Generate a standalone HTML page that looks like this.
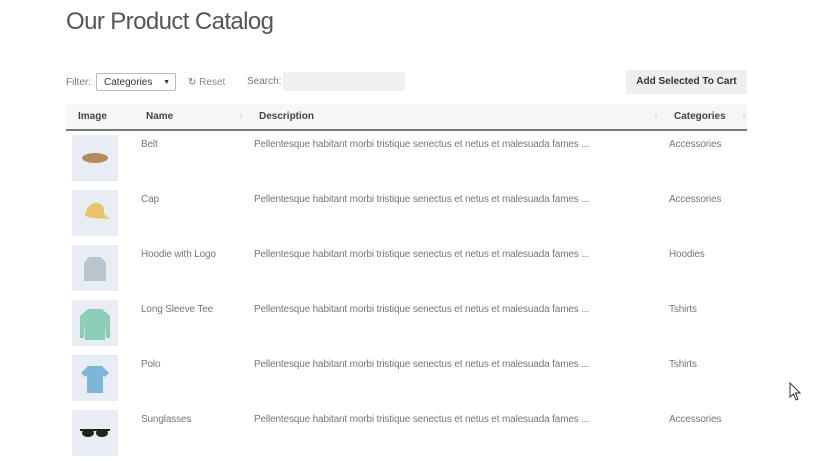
<!DOCTYPE html>
<html><head><style>
body{margin:0;width:820px;height:461px;background:#fff;font-family:"Liberation Sans",sans-serif;overflow:hidden;position:relative;color:#666}
.a{position:absolute;white-space:nowrap}
h1{position:absolute;left:66px;top:8px;margin:0;font-weight:300;font-size:24px;color:#555;letter-spacing:-0.6px}
.sm{font-size:10px;color:#777}
.th{font-size:10px;font-weight:bold;color:#444}
.td{font-size:10px;color:#777;letter-spacing:-0.15px}
.img{position:absolute;left:72px;width:46px;height:46px;background:#e8edf3}
.arr{font-size:7px;color:#ccc}
</style></head><body>
<h1>Our Product Catalog</h1>
<div class="a sm" style="left:66px;top:77px">Filter:</div>
<div class="a" style="left:96px;top:73px;width:80px;height:18px;border:1px solid #bbb;border-radius:2px;font-size:10px;color:#333;line-height:18px;padding-left:7px;box-sizing:border-box">Categories<span style="position:absolute;right:5px;font-size:7px">▼</span></div>
<div class="a sm" style="left:188px;top:77px;color:#b55">↻ <span style="color:#888">Reset</span></div>
<div class="a sm" style="left:247px;top:76px">Search:</div>
<div class="a" style="left:283px;top:72px;width:122px;height:19px;background:#f0f0f0"></div>
<div class="a" style="left:626px;top:70px;width:121px;height:24px;background:#efefef;font-size:10px;font-weight:bold;color:#333;text-align:center;line-height:24px">Add Selected To Cart</div>
<div class="a" style="left:66px;top:104px;width:681px;height:25px;background:#f7f7f7;border-bottom:2px solid #777"></div>
<div class="a th" style="left:78px;top:111px">Image</div>
<div class="a th" style="left:146px;top:111px">Name</div>
<div class="a arr" style="left:238px;top:112px">⇳</div>
<div class="a th" style="left:259px;top:111px">Description</div>
<div class="a arr" style="left:653px;top:112px">⇳</div>
<div class="a th" style="left:674px;top:111px">Categories</div>
<div class="a arr" style="left:741px;top:112px">⇳</div>

<div class="img" style="top:135px"><svg width="46" height="46"><ellipse cx="23" cy="23" rx="13" ry="5" fill="#b58a5e"/></svg></div>
<div class="a td" style="left:141px;top:139px">Belt</div>
<div class="a td" style="left:254px;top:139px">Pellentesque habitant morbi tristique senectus et netus et malesuada fames ...</div>
<div class="a td" style="left:669px;top:139px">Accessories</div>

<div class="img" style="top:190px"><svg width="46" height="46"><path d="M13 26 Q15 12 26 13 Q33 15 32 24 L38 29 L20 28Z" fill="#e8c46a"/></svg></div>
<div class="a td" style="left:141px;top:194px">Cap</div>
<div class="a td" style="left:254px;top:194px">Pellentesque habitant morbi tristique senectus et netus et malesuada fames ...</div>
<div class="a td" style="left:669px;top:194px">Accessories</div>

<div class="img" style="top:245px"><svg width="46" height="46"><path d="M17 12 L29 12 L34 18 L34 36 L12 36 L12 18Z" fill="#b8c4d0"/></svg></div>
<div class="a td" style="left:141px;top:249px">Hoodie with Logo</div>
<div class="a td" style="left:254px;top:249px">Pellentesque habitant morbi tristique senectus et netus et malesuada fames ...</div>
<div class="a td" style="left:669px;top:249px">Hoodies</div>

<div class="img" style="top:300px"><svg width="46" height="46"><path d="M16 9 L30 9 L38 16 L38 38 L34 38 L33 22 L33 40 L13 40 L13 22 L12 38 L8 38 L8 16Z" fill="#8ccdb8"/></svg></div>
<div class="a td" style="left:141px;top:304px">Long Sleeve Tee</div>
<div class="a td" style="left:254px;top:304px">Pellentesque habitant morbi tristique senectus et netus et malesuada fames ...</div>
<div class="a td" style="left:669px;top:304px">Tshirts</div>

<div class="img" style="top:355px"><svg width="46" height="46"><path d="M16 11 L30 11 L37 18 L33 22 L31 20 L31 38 L15 38 L15 20 L13 22 L9 18Z" fill="#7fb5d8"/></svg></div>
<div class="a td" style="left:141px;top:359px">Polo</div>
<div class="a td" style="left:254px;top:359px">Pellentesque habitant morbi tristique senectus et netus et malesuada fames ...</div>
<div class="a td" style="left:669px;top:359px">Tshirts</div>

<div class="img" style="top:410px"><svg width="46" height="46"><ellipse cx="16" cy="23" rx="6" ry="4" fill="#222"/><ellipse cx="30" cy="23" rx="6" ry="4" fill="#222"/><path d="M8 20 L38 20" stroke="#222" stroke-width="2"/></svg></div>
<div class="a td" style="left:141px;top:414px">Sunglasses</div>
<div class="a td" style="left:254px;top:414px">Pellentesque habitant morbi tristique senectus et netus et malesuada fames ...</div>
<div class="a td" style="left:669px;top:414px">Accessories</div>

<svg class="a" style="left:789px;top:382px" width="14" height="20"><path d="M1 1 L1 15 L4.5 12 L7 18 L9 17 L6.5 11 L11 11Z" fill="#fff" stroke="#333" stroke-width="1"/></svg>
</body></html>
